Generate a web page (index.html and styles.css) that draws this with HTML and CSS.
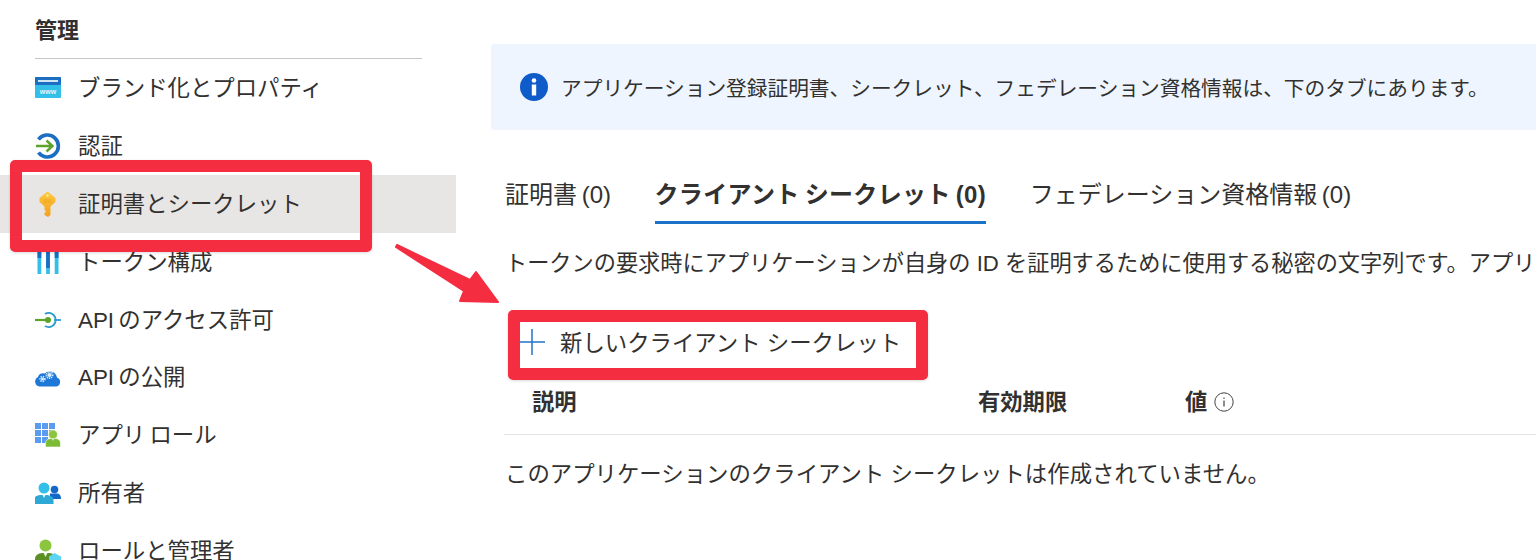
FILE: index.html
```html
<!DOCTYPE html>
<html lang="ja">
<head>
<meta charset="utf-8">
<title>証明書とシークレット</title>
<link rel="stylesheet" href="styles.css">
</head>
<body>
<div class="page">
  <aside class="sidebar">
    <h2 class="side-title">管理</h2>
    <nav class="side-nav">
      <a class="side-item">
        <svg class="ico" viewBox="0 0 26 22"><rect x="0" y="0" width="26" height="21" rx="1" fill="#32bfe8"/><rect x="0" y="0" width="26" height="8" rx="1" fill="#1b6ec2"/><rect x="3" y="3" width="20" height="2" fill="#cfe6f7"/><text x="13" y="16.5" class="www">www</text></svg>
        <span>ブランド化とプロパティ</span>
      </a>
      <a class="side-item">
        <svg class="ico" viewBox="0 0 26 26"><path d="M3.500 6.500A11 11 0 1 1 3.500 19.500" fill="none" stroke="#1b6ec2" stroke-width="3.600"/><path d="M1 13H17M11.500 7.500 17.500 13 11.500 18.500" fill="none" stroke="#5ba32b" stroke-width="2.400"/></svg>
        <span>認証</span>
      </a>
      <a class="side-item active">
        <svg class="ico" viewBox="0 0 26 26"><defs><linearGradient id="keyfill" x1="0" y1="0" x2="0" y2="1"><stop offset="0" stop-color="#fdc93f"/><stop offset="1" stop-color="#f59f1f"/></linearGradient></defs><path d="M12.500 0.500 20.500 7V11L15.500 15.500V24L13 26 9.500 24V22L11 20.500 9.500 19V15.500L4.500 11V7Z" fill="url(#keyfill)" stroke-linejoin="round"/><circle cx="12.500" cy="4.500" r="1.200" fill="#fde8a8"/><path d="M8.500 9H16.500M8.500 11H16.500" stroke="#f0a020" stroke-width=".8"/></svg>
        <span>証明書とシークレット</span>
      </a>
      <a class="side-item">
        <svg class="ico" viewBox="0 0 26 26"><rect x="2.500" y="1" width="3.800" height="24" fill="#32bfe8"/><rect x="2.500" y="1" width="3.800" height="8" fill="#1b6ec2"/><rect x="11.100" y="1" width="3.800" height="24" fill="#32bfe8"/><rect x="11.100" y="1" width="3.800" height="18" fill="#1b6ec2"/><rect x="19.700" y="1" width="3.800" height="24" fill="#32bfe8"/><rect x="19.700" y="1" width="3.800" height="8" fill="#1b6ec2"/></svg>
        <span>トークン構成</span>
      </a>
      <a class="side-item">
        <svg class="ico" viewBox="0 0 26 26"><path d="M10 7A7 7 0 1 1 10 19" fill="none" stroke="#2f9ccf" stroke-width="2"/><path d="M19 13H26" stroke="#2f9ccf" stroke-width="1.800"/><path d="M0 13H13" stroke="#5ba32b" stroke-width="2.200"/><circle cx="13" cy="13" r="3" fill="#5ba32b"/></svg>
        <span>API のアクセス許可</span>
      </a>
      <a class="side-item">
        <svg class="ico" viewBox="0 0 26 20"><path d="M5.500 19.500A5 5 0 0 1 3 10 5 5 0 0 1 9.500 6.500 7.500 7.500 0 0 1 22 10.500 4.700 4.700 0 0 1 21.500 19.500Z" fill="#1f78d8"/><g class="gear"><circle cx="7.500" cy="12" r="2.400" class="gear-teeth"/><circle cx="7.500" cy="12" r="1.500" class="gear-body"/><circle cx="14.500" cy="8" r="3.200" class="gear-teeth"/><circle cx="14.500" cy="8" r="2.100" class="gear-body"/></g></svg>
        <span>API の公開</span>
      </a>
      <a class="side-item">
        <svg class="ico" viewBox="0 0 26 26"><g fill="#5b9bf0"><rect x="0" y="1" width="6" height="6"/><rect x="7" y="1" width="6" height="6"/><rect x="14" y="1" width="6" height="6"/><rect x="0" y="8" width="6" height="6"/><rect x="7" y="8" width="6" height="6"/><rect x="14" y="8" width="6" height="6"/><rect x="0" y="15" width="6" height="6"/><rect x="7" y="15" width="6" height="6"/></g><path d="M10.500 25V21.500C10.500 18 13 17 15 16.500H21C23.500 17 25.500 18 25.500 21.500V25Z" fill="#7bbb35" stroke="#fff" stroke-width=".6"/><circle cx="18" cy="12.500" r="4.500" fill="#8cc63f" stroke="#fff" stroke-width=".6"/><path d="M17 16.500H19L18 19Z" fill="#eaf6dc"/></svg>
        <span>アプリ ロール</span>
      </a>
      <a class="side-item">
        <svg class="ico" viewBox="0 0 26 22"><path d="M15 11.500H23C25 12 26 14 26 17H15Z" fill="#1468c8"/><circle cx="19.500" cy="7.500" r="3.800" fill="#1468c8"/><path d="M-1 22V18C-1 14.500 2 13.500 5 13H12C15 13.500 18.500 14.500 18.500 18V22Z" fill="#2ea8d4"/><circle cx="9" cy="6" r="5.500" fill="#32bfe8"/><path d="M7.500 13H10.500L9 16Z" fill="#e8f6fc"/></svg>
        <span>所有者</span>
      </a>
      <a class="side-item">
        <svg class="ico" viewBox="0 0 26 26"><path d="M0 26V21C0 17 3.500 15.500 7 15H14C18 15.500 21 17 21 21V26Z" fill="#5b8f22"/><circle cx="10.500" cy="7.500" r="6" fill="#8cc63f"/><path d="M8.500 15H12.500L10.500 19Z" fill="#e8f6dc"/><path d="M19.500 15 26 18.500V25L19.500 28 14 25V18.500Z" fill="#5ed4f2"/></svg>
        <span>ロールと管理者</span>
      </a>
    </nav>
  </aside>

  <main class="content">
    <div class="banner">
      <svg class="banner-ico" viewBox="0 0 28 28"><circle cx="14" cy="14" r="14" fill="#0f5bc9"/><circle cx="14" cy="7.500" r="2.300" fill="#fff"/><rect x="11.800" y="11.500" width="4.400" height="11" fill="#fff"/></svg>
      <span>アプリケーション登録証明書、シークレット、フェデレーション資格情報は、下のタブにあります。</span>
    </div>

    <div class="tabs">
      <a class="tab">証明書 (0)</a>
      <a class="tab tab-active">クライアント シークレット (0)</a>
      <a class="tab">フェデレーション資格情報 (0)</a>
    </div>

    <p class="desc">トークンの要求時にアプリケーションが自身の ID を証明するために使用する秘密の文字列です。アプリケーション パスワードとも呼ばれます。</p>

    <div class="command">
      <svg class="plus" viewBox="0 0 25 26"><path d="M12 0V26M0 13H25" stroke="#2276c9" stroke-width="1.500" fill="none"/></svg>
      <span>新しいクライアント シークレット</span>
    </div>

    <div class="thead">
      <span class="col col-desc">説明</span>
      <span class="col col-exp">有効期限</span>
      <span class="col col-val">値
        <svg class="info" viewBox="0 0 20 20"><circle cx="10" cy="10" r="9.200" fill="none" stroke="#444" stroke-width="1"/><rect x="9.400" y="8.500" width="1.200" height="6" fill="#444"/><rect x="9.400" y="5.500" width="1.200" height="1.400" fill="#444"/></svg>
      </span>
    </div>
    <p class="empty">このアプリケーションのクライアント シークレットは作成されていません。</p>
  </main>

  <div class="mark mark-nav"></div>
  <div class="mark mark-btn"></div>
  <svg class="arrow" viewBox="0 0 120 70"><path d="M5 5 78 40 84 32 106 62 68 61 72 51 4 7Z" fill="#f52d41" stroke="#f52d41" stroke-width="2" stroke-linejoin="round"/></svg>
</div>
</body>
</html>
```
FILE: styles.css
```css
* { box-sizing: border-box; }
html, body { margin: 0; padding: 0; background: #fff; }
body {
  font-family: "Liberation Sans", "Noto Sans CJK JP", sans-serif;
  color: #323130;
  width: 1536px;
  height: 560px;
  overflow: hidden;
}
.page { position: relative; display: flex; width: 1536px; height: 560px; overflow: hidden; }

.sidebar { width: 456px; flex: none; padding-top: 16px; }
.side-title {
  margin: 0 34px 0 35px;
  height: 43px;
  font-size: 22px;
  line-height: 29px;
  font-weight: 700;
  border-bottom: 1.5px solid #c8c6c4;
}
.side-nav { display: flex; flex-direction: column; }
.side-item {
  display: flex;
  align-items: center;
  gap: 17px;
  height: 57.9px;
  padding-left: 35px;
  font-size: 22.4px;
  word-spacing: -2px;
  white-space: nowrap;
  flex: none;
}
.side-item span { margin-bottom: 4px; }
.side-item.active { background: #e7e6e5; }
.ico { width: 26px; height: 26px; flex: none; }
.www { font: 700 7px "Liberation Sans", sans-serif; fill: #e8f6fc; text-anchor: middle; }
.gear-teeth { fill: none; stroke: #d8ecfa; stroke-width: 1.6; stroke-dasharray: 1.2 .9; }
.gear-body { fill: #d8ecfa; }

.content { margin-left: 35px; flex: 1; min-width: 0; padding-top: 44px; }
.banner {
  display: flex;
  align-items: center;
  gap: 13px;
  height: 86px;
  padding-left: 29px;
  background: #eef5fe;
  border-radius: 3px 0 0 3px;
  font-size: 20.7px;
  white-space: nowrap;
}
.banner-ico { width: 28px; height: 28px; flex: none; }

.tabs { display: flex; gap: 43.5px; margin: 46px 0 0 14px; height: 48px; }
.tab { height: 48px; padding-top: 3px; font-size: 24px; line-height: 32px; word-spacing: -2px; white-space: nowrap; }
.tab-active { font-weight: 700; letter-spacing: .35px; border-bottom: 3px solid #1a73c9; }

.desc { margin: 24px 0 0 14px; font-size: 22.2px; line-height: 32px; white-space: nowrap; }

.command {
  display: flex;
  align-items: center;
  gap: 15px;
  margin: 49px 0 0 29px;
  height: 26px;
  font-size: 22.4px;
  white-space: nowrap;
}
.command span { margin-bottom: 2px; }
.plus { width: 25px; height: 26px; flex: none; }

.thead {
  display: flex;
  align-items: center;
  margin: 15px 0 0 13px;
  height: 65px;
  padding-bottom: 3.5px;
  border-bottom: 1.5px solid #e5e4e3;
  font-size: 22.3px;
  font-weight: 700;
}
.col-desc { width: 474px; padding-left: 28px; flex: none; }
.col-exp { width: 207px; flex: none; }
.col-val { display: flex; align-items: center; gap: 7px; }
.info { width: 20px; height: 20px; margin-top: 4px; }

.empty { margin: 24px 0 0 14px; font-size: 22.4px; line-height: 32px; white-space: nowrap; }

.mark { position: absolute; border: 12px solid #f52d41; border-radius: 5px; box-shadow: 0 1px 3px rgba(0,0,0,.15); }
.mark-nav { left: 10px; top: 160px; width: 362px; height: 92px; }
.mark-btn { left: 508px; top: 310px; width: 420px; height: 70px; }
.arrow { position: absolute; left: 392px; top: 240px; width: 120px; height: 70px; }
```
